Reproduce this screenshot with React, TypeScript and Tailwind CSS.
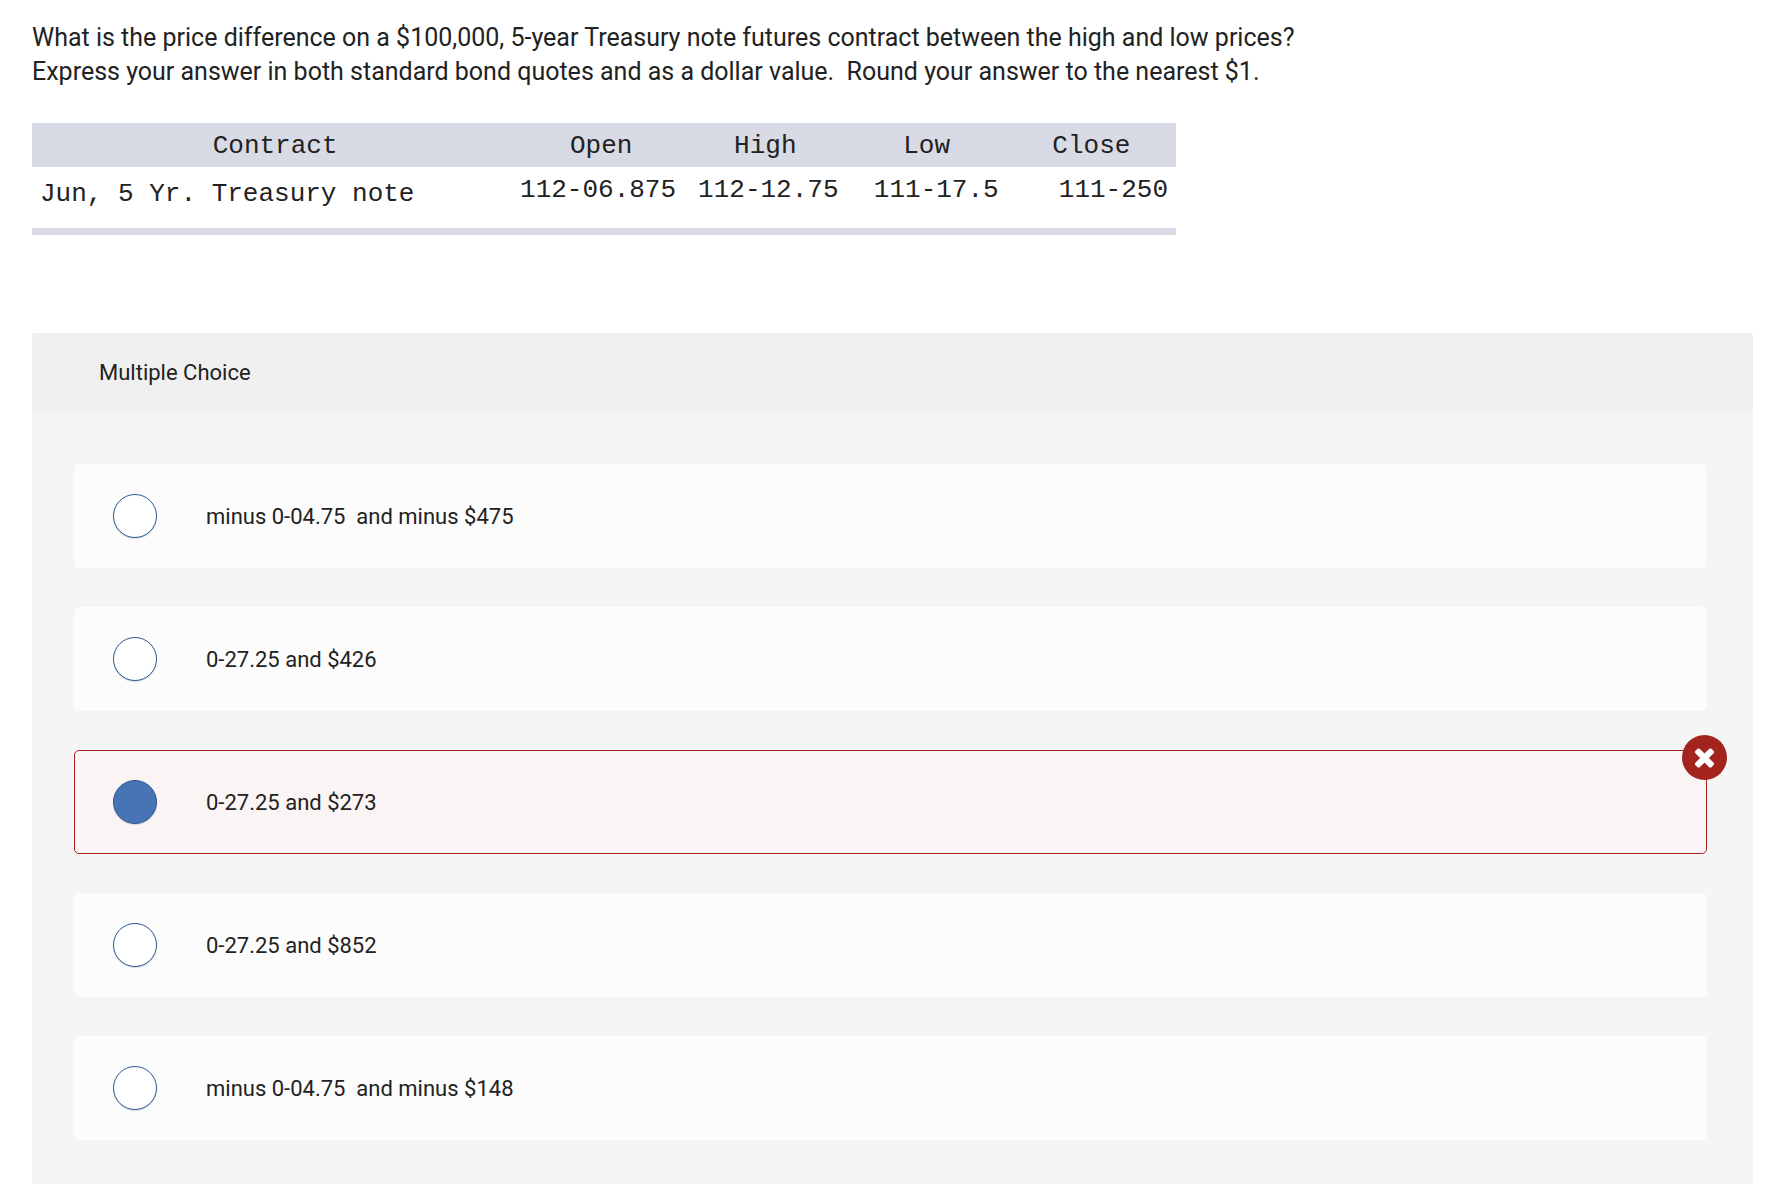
import { useState } from "react";

const columns = ["Contract", "Open", "High", "Low", "Close"];

const choices = [
  { id: "a", text: "minus 0-04.75 \u00a0and minus $475" },
  { id: "b", text: "0-27.25 and $426" },
  { id: "c", text: "0-27.25 and $273" },
  { id: "d", text: "0-27.25 and $852" },
  { id: "e", text: "minus 0-04.75 \u00a0and minus $148" },
];

// the submitted answer, marked as incorrect
const wrongId = "c";

function QuoteTable() {
  return (
    <table className="mt-[34px] w-full max-w-[1144px] table-fixed border-separate border-spacing-0 border-b-[7px] border-[#d8dbe5] font-['Liberation_Mono','Courier_New',monospace] text-[26px] leading-[42px]">
      <colgroup>
        <col className="w-[42.5%]" />
        <col className="w-[14.5%]" />
        <col className="w-[14.2%]" />
        <col className="w-[14%]" />
        <col className="w-[14.8%]" />
      </colgroup>
      <thead className="bg-[#d8dbe5]">
        <tr>
          {columns.map((name) => (
            <th key={name} scope="col" className="px-0 pb-0 pt-0.5 text-center font-normal">{name}</th>
          ))}
        </tr>
      </thead>
      <tbody>
        <tr className="h-[61px] whitespace-nowrap align-top">
          <td className="px-2 pt-1.5">Jun, 5 Yr. Treasury note</td>
          <td className="pr-2 pt-0.5 text-right">112-06.875</td>
          <td className="pr-2 pt-0.5 text-right">112-12.75</td>
          <td className="pr-2 pt-0.5 text-right">111-17.5</td>
          <td className="pr-2 pt-0.5 text-right">111-250</td>
        </tr>
      </tbody>
    </table>
  );
}

function CrossIcon() {
  return (
    <svg viewBox="0 0 1792 1792" className="size-[29px]" fill="currentColor" role="img" aria-label="Incorrect">
      <path d="M1490 1290q0 40-28 68l-136 136q-28 28-68 28t-68-28l-294-294-294 294q-28 28-68 28t-68-28l-136-136q-28-28-28-68t28-68l294-294-294-294q-28-28-28-68t28-68l136-136q28-28 68-28t68 28l294 294 294-294q28-28 68-28t68 28l136 136q28 28 28 68t-28 68l-294 294 294 294q28 28 28 68z" />
    </svg>
  );
}

export default function App() {
  const [selected, setSelected] = useState(wrongId);

  return (
    <main className="min-h-screen bg-white pl-8 pr-[13px] pt-[21px] font-[Roboto,sans-serif] text-[#222]">
      <p className="text-[25px] leading-[34px]">
        What is the price difference on a $100,000, 5-year Treasury note futures contract between the high and low prices?
        <br />
        Express your answer in both standard bond quotes and as a dollar value. &nbsp;Round your answer to the nearest $1.
      </p>

      <QuoteTable />

      <section className="mt-[98px] rounded-t bg-[#f5f5f5]">
        <h2 className="rounded-t bg-[#f0f0f0] px-[67px] text-[22px] leading-[80px]">Multiple Choice</h2>

        <div className="flex flex-col gap-[39px] pb-11 pl-[42px] pr-[46px] pt-[51px]">
          {choices.map((choice) => {
            const isWrong = choice.id === wrongId;
            return (
              <label
                key={choice.id}
                className={`relative flex h-[104px] cursor-pointer items-center rounded-[5px] border pl-[38px] ${
                  isWrong ? "border-[#a3241e] bg-[#faf4f4]" : "border-transparent bg-[#fcfcfc]"
                }`}
              >
                <input
                  type="radio"
                  name="answer"
                  value={choice.id}
                  checked={selected === choice.id}
                  onChange={() => setSelected(choice.id)}
                  className="size-11 shrink-0 appearance-none rounded-full border border-[#2c5a94] bg-white shadow-[0_1px_1px_rgba(0,0,0,0.15)] checked:bg-[#4674b4]"
                />
                <span className="ml-[49px] pt-0.5 text-[22px] leading-[30px]">{choice.text}</span>
                {isWrong && (
                  <span className="absolute -right-[21px] -top-4 flex size-[45px] items-center justify-center rounded-full bg-[#a3241e] text-white">
                    <CrossIcon />
                  </span>
                )}
              </label>
            );
          })}
        </div>
      </section>
    </main>
  );
}
